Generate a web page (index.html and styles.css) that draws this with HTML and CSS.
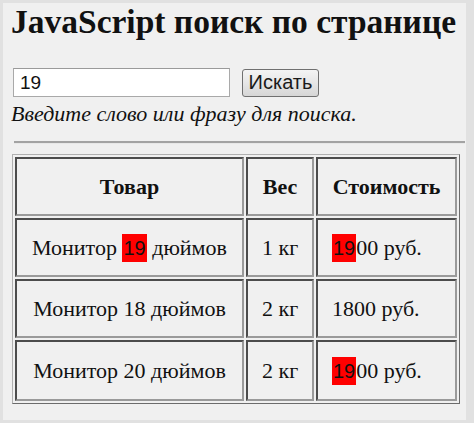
FILE: index.html
```html
<!DOCTYPE html>
<html lang="ru">
<head>
<meta charset="utf-8">
<title>JavaScript поиск по странице</title>
<link rel="stylesheet" href="styles.css">
</head>
<body>
<div class="frame">
  <h1 class="title">JavaScript поиск по странице</h1>
  <form class="search">
    <input class="field" type="text" value="19">
    <button class="btn" type="button">Искать</button>
  </form>
  <p class="hint">Введите слово или фразу для поиска.</p>
  <hr class="rule">
  <table class="goods">
    <tr>
      <th class="c1">Товар</th>
      <th class="c2">Вес</th>
      <th class="c3">Стоимость</th>
    </tr>
    <tr>
      <td class="c1 center">Монитор <span class="hl">19</span> дюймов</td>
      <td class="c2 center">1 кг</td>
      <td class="c3"><span class="hl">19</span>00 руб.</td>
    </tr>
    <tr>
      <td class="c1 center">Монитор 18 дюймов</td>
      <td class="c2 center">2 кг</td>
      <td class="c3">1800 руб.</td>
    </tr>
    <tr>
      <td class="c1 center">Монитор 20 дюймов</td>
      <td class="c2 center">2 кг</td>
      <td class="c3"><span class="hl">19</span>00 руб.</td>
    </tr>
  </table>
</div>
</body>
</html>
```
FILE: styles.css
```css
html, body {
  margin: 0;
  padding: 0;
  background: #f7f7f7;
}
.frame {
  box-sizing: border-box;
  width: 474px;
  height: 423px;
  border: 3px solid #e1e1e1;
  border-right-width: 8px;
  background: #f0f0f0;
  padding: 0 0 0 8px;
  font-family: "Liberation Serif", "Times New Roman", serif;
  color: #111;
  overflow: hidden;
}
.title {
  margin: 0;
  font-size: 33.5px;
  line-height: 38px;
  font-weight: bold;
  white-space: nowrap;
}
.search {
  display: flex;
  align-items: center;
  gap: 12px;
  margin: 27px 0 0 2px;
}
.field {
  box-sizing: border-box;
  width: 217px;
  height: 29px;
  margin: 0;
  border: 1px solid #a9a9a9;
  border-top-color: #9a9a9a;
  background: #fff;
  padding: 2px 6px;
  font-family: "Liberation Sans", Arial, sans-serif;
  font-size: 19px;
  color: #111;
}
.btn {
  box-sizing: border-box;
  width: 77px;
  height: 28px;
  margin: 0;
  border: 1px solid #707070;
  border-radius: 3px;
  background: linear-gradient(#f4f4f4, #e6e6e6 50%, #d6d6d6);
  font-family: "Liberation Sans", Arial, sans-serif;
  font-size: 20px;
  color: #1a1a1a;
  padding: 0;
}
.hint {
  margin: 4px 0 0 0;
  font-style: italic;
  font-size: 22px;
  line-height: 26px;
  white-space: nowrap;
}
.rule {
  margin: 14px 0 0 3px;
  width: 451px;
  height: 0;
  border: 0;
  border-top: 2px solid #a3a3a3;
  border-bottom: 1px solid #e8e8e8;
}
.goods {
  margin: 10px 0 0 1px;
  border: 1px solid #8c8c8c;
  border-color: #b0b0b0 #6c6c6c #6c6c6c #b0b0b0;
  border-spacing: 2px;
  font-size: 22px;
  table-layout: fixed;
  width: 448px;
}
.goods th, .goods td {
  box-sizing: border-box;
  height: 59px;
  border: 2px solid #5c5c5c;
  border-color: #4c4c4c #9a9a9a #9a9a9a #4c4c4c;
  padding: 0 14px;
  vertical-align: middle;
  white-space: nowrap;
}
.goods th {
  text-align: center;
  font-weight: bold;
}
.goods td {
  text-align: left;
}
.goods .center {
  text-align: center;
}
.goods tr:last-child td {
  height: 61px;
}
.c1 { width: 229px; }
.c2 { width: 68px; }
.c3 { width: 141px; }
.hl {
  background: #ff0000;
  font-family: "Liberation Sans", Arial, sans-serif;
  font-size: 20px;
  padding: 3px 1px;
}
```
